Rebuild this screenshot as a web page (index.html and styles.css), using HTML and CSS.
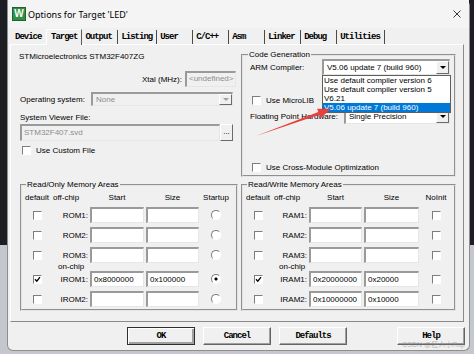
FILE: index.html
```html
<!DOCTYPE html>
<html lang="en">

<head>
    <meta charset="UTF-8">
    <title>Options for Target 'LED'</title>
    <link rel="stylesheet" href="styles.css">
</head>

<body>
    <div class="window">
        <div class="titlebar">
            <span class="app-icon">W</span>
            <span class="title">Options for Target 'LED'</span>
            <svg class="close" viewBox="0 0 8 8"><path d="M0.5 0.5 L7.5 7.5 M7.5 0.5 L0.5 7.5" stroke="#222" stroke-width="0.9" /></svg>
        </div>

        <div class="tabs">
            <span class="tab">Device</span>
            <span class="tab active">Target</span>
            <span class="tab">Output</span>
            <span class="tab">Listing</span>
            <span class="tab">User</span>
            <span class="tab">C/C++</span>
            <span class="tab">Asm</span>
            <span class="tab">Linker</span>
            <span class="tab">Debug</span>
            <span class="tab">Utilities</span>
        </div>

        <div class="panel">
            <!-- device info -->
            <div class="device">
                <div class="chip">STMicroelectronics STM32F407ZG</div>
                <div class="xtal">
                    <span>Xtal (MHz):</span>
                    <span class="field off">&lt;undefined&gt;</span>
                </div>
                <div class="os">
                    <span class="os-label">Operating system:</span>
                    <span class="select off">None<span class="drop"></span></span>
                </div>
                <div class="svf-label">System Viewer File:</div>
                <div class="svf">
                    <span class="field off">STM32F407.svd</span>
                    <span class="dots">...</span>
                </div>
                <div class="opt custom">
                    <span class="check"></span>
                    <span>Use Custom File</span>
                </div>
            </div>

            <fieldset class="group codegen">
                <legend>Code Generation</legend>
                <div class="arm">
                    <span class="arm-label">ARM Compiler:</span>
                    <span class="select">V5.06 update 7 (build 960)<span class="drop"></span>
                        <ul class="droplist">
                            <li>Use default compiler version 6</li>
                            <li>Use default compiler version 5</li>
                            <li>V6.21</li>
                            <li class="hl">V5.06 update 7 (build 960)</li>
                        </ul>
                    </span>
                </div>
                <div class="opt micro">
                    <span class="check"></span>
                    <span>Use MicroLIB</span>
                </div>
                <div class="fp">
                    <span class="fp-label">Floating Point Hardware:</span>
                    <span class="select">Single Precision<span class="drop"></span></span>
                </div>
                <div class="opt cross">
                    <span class="check"></span>
                    <span>Use Cross-Module Optimization</span>
                </div>
            </fieldset>

            <fieldset class="group mem">
                <legend>Read/Only Memory Areas</legend>
                <div class="grid">
                    <span class="hd">default</span>
                    <span class="hd left">off-chip</span>
                    <span class="hd">Start</span>
                    <span class="hd">Size</span>
                    <span class="hd">Startup</span>

                    <span class="check"></span><span class="name">ROM1:</span><span class="field"></span><span class="field"></span><span class="radio"></span>
                    <span class="check"></span><span class="name">ROM2:</span><span class="field"></span><span class="field"></span><span class="radio"></span>
                    <span class="check"></span><span class="name">ROM3:</span><span class="field"></span><span class="field"></span><span class="radio"></span>

                    <span class="onchip">on-chip</span>

                    <span class="check on"><svg viewBox="0 0 7 7"><path d="M1 3.2 L2.8 5.2 L6 1.2" /></svg></span><span class="name">IROM1:</span><span class="field">0x8000000</span><span class="field">0x100000</span><span class="radio on"></span>
                    <span class="check"></span><span class="name">IROM2:</span><span class="field"></span><span class="field"></span><span class="radio"></span>
                </div>
            </fieldset>

            <fieldset class="group mem ram">
                <legend>Read/Write Memory Areas</legend>
                <div class="grid">
                    <span class="hd">default</span>
                    <span class="hd left">off-chip</span>
                    <span class="hd">Start</span>
                    <span class="hd">Size</span>
                    <span class="hd">NoInit</span>

                    <span class="check"></span><span class="name">RAM1:</span><span class="field"></span><span class="field"></span><span class="check"></span>
                    <span class="check"></span><span class="name">RAM2:</span><span class="field"></span><span class="field"></span><span class="check"></span>
                    <span class="check"></span><span class="name">RAM3:</span><span class="field"></span><span class="field"></span><span class="check"></span>

                    <span class="onchip">on-chip</span>

                    <span class="check on"><svg viewBox="0 0 7 7"><path d="M1 3.2 L2.8 5.2 L6 1.2" /></svg></span><span class="name">IRAM1:</span><span class="field">0x20000000</span><span class="field">0x20000</span><span class="check"></span>
                    <span class="check"></span><span class="name">IRAM2:</span><span class="field">0x10000000</span><span class="field">0x10000</span><span class="check"></span>
                </div>
            </fieldset>
        </div>

        <div class="footer">
            <button class="btn default">OK</button>
            <button class="btn">Cancel</button>
            <button class="btn">Defaults</button>
            <button class="btn help">Help</button>
        </div>

        <!-- annotation drawn over the dialog -->
        <svg class="pointer" viewBox="248 100 90 40">
            <polygon points="256,136 318.3,112 317.1,108.7 331,109 320.5,118.1 319.3,114.8" />
        </svg>
        <span class="watermark">CSDN @狂人小Rup</span>
    </div>
</body>

</html>
```

FILE: styles.css
```css
* {
    margin: 0;
    padding: 0;
    box-sizing: border-box;
}

body {
    width: 474px;
    height: 354px;
    overflow: hidden;
    background: linear-gradient(to bottom, #1d1e21 0, #1d1e21 245px, #c4c8ce 245px);
    font-family: "Liberation Sans", Arial, sans-serif;
    font-size: 8px;
    color: #000;
}

div.window {
    position: relative;
    margin-left: 7px;
    width: 463px;
    height: 351px;
    background: #f0f0f0;
    border: 1px solid #8e8e8e;
    border-top: none;
    border-radius: 0 6px 6px 6px;
    display: flex;
    flex-direction: column;
}

/* title bar */
.titlebar {
    height: 28px;
    flex-shrink: 0;
    display: flex;
    align-items: center;
    padding: 0 8px 0 4px;
    background: #f4f4f4;
}

.app-icon {
    width: 14px;
    height: 14px;
    background: #2f8f45;
    border: 1px solid #1d6430;
    color: #fff;
    font: bold 10px/12px "Liberation Sans", sans-serif;
    text-align: center;
}

.title {
    margin-left: 2px;
    font-family: "Noto Sans", "Open Sans", sans-serif;
    font-size: 9px;
}

.close {
    margin-left: auto;
    width: 8px;
    height: 8px;
}

/* tabs */
.tabs {
    height: 16px;
    flex-shrink: 0;
    display: flex;
    align-items: flex-end;
    padding-left: 4px;
    font-family: "Liberation Mono", monospace;
    font-weight: bold;
    font-size: 9px;
    letter-spacing: -1px;
}

.tab {
    height: 14px;
    line-height: 14px;
    min-width: 36px;
    padding: 0 4px 0 3px;
    border-right: 1px solid #4a4a4a;
    white-space: nowrap;
}

.tab.active {
    position: relative;
    z-index: 1;
    height: 16px;
    line-height: 15px;
    min-width: 0;
    margin: 0 0 -1px -2px;
    padding: 0 4px;
    background: #f0f0f0;
    border-top: 1px solid #fff;
    border-left: 1px solid #fff;
    border-right-color: #5a5a5a;
}

/* tab page */
.panel {
    margin-left: 2px;
    width: 454px;
    height: 278px;
    flex-shrink: 0;
    border: 1px solid;
    border-color: #fff #8a8a8a #8a8a8a #fff;
    padding: 5px 7px 10px 9px;
    display: grid;
    grid-template-columns: 218px 215px;
    grid-template-rows: 127px 131px;
    column-gap: 3px;
    row-gap: 3px;
}

.off {
    color: #8d8d8d;
}

.field {
    display: block;
    height: 16px;
    line-height: 13px;
    padding-left: 2px;
    background: #fff;
    border-style: solid;
    border-width: 2px 1px 1px 2px;
    border-color: #9a9a9a #e6e6e6 #e6e6e6 #9a9a9a;
    white-space: nowrap;
    overflow: hidden;
}

.field.off {
    background: #f0f0f0;
}

.select {
    position: relative;
    display: flex;
    align-items: center;
    height: 16px;
    padding-left: 3px;
    background: #fff;
    border-style: solid;
    border-width: 2px 1px 1px 2px;
    border-color: #9a9a9a #e6e6e6 #e6e6e6 #9a9a9a;
    white-space: nowrap;
}

.select.off {
    background: #f0f0f0;
}

.drop {
    margin-left: auto;
    width: 13px;
    height: 100%;
    display: flex;
    align-items: center;
    justify-content: center;
    background: #f0f0f0;
    border: 1px solid;
    border-color: #fff #6a6a6a #6a6a6a #fff;
}

.drop::before {
    content: "";
    border-left: 3px solid transparent;
    border-right: 3px solid transparent;
    border-top: 3px solid #000;
}

.select.off .drop::before {
    border-top-color: #a0a0a0;
}

.droplist {
    position: absolute;
    z-index: 3;
    top: calc(100% + 1px);
    left: -2px;
    width: 129px;
    list-style: none;
    background: #fff;
    border: 1px solid #5e5e5e;
}

.droplist li {
    line-height: 9px;
    padding-left: 1px;
    white-space: nowrap;
}

.droplist li.hl {
    background: #0078d7;
    color: #fff;
}

.check {
    position: relative;
    display: block;
    width: 9px;
    height: 9px;
    flex-shrink: 0;
    background: #fff;
    border: 1px solid;
    border-color: #7d7d7d #fff #fff #7d7d7d;
}

.check svg {
    position: absolute;
    left: 0;
    top: 0;
    width: 7px;
    height: 7px;
}

.check path {
    fill: none;
    stroke: #000;
    stroke-width: 1.3;
}

.radio {
    display: block;
    width: 10px;
    height: 10px;
    border-radius: 50%;
    background: #fff;
    border: 1px solid;
    border-color: #7d7d7d #fff #fff #7d7d7d;
}

.radio.on {
    background: radial-gradient(circle, #000 0, #000 1.3px, #fff 1.8px);
}

.opt {
    display: flex;
    align-items: center;
    height: 10px;
}

.opt .check {
    margin: 0 5px 0 2px;
}

/* left column */
.chip {
    line-height: 10px;
    margin: 2px 0 0 -1px;
}

.xtal {
    display: flex;
    align-items: center;
    justify-content: flex-end;
    height: 16px;
    margin-top: 9px;
    padding-right: 2px;
}

.xtal .field {
    width: 51px;
    margin-left: 3px;
    line-height: 12px;
}

.os {
    display: flex;
    align-items: center;
    height: 14px;
    margin-top: 5px;
}

.os-label {
    width: 71px;
}

.os .select {
    width: 142px;
    height: 14px;
}

.svf-label {
    line-height: 10px;
    margin-top: 7px;
}

.svf {
    display: flex;
    height: 17px;
    margin-top: 1px;
}

.svf .field {
    width: 200px;
    height: 17px;
    line-height: 14px;
}

.dots {
    width: 13px;
    text-align: center;
    line-height: 13px;
    background: #f0f0f0;
    border: 1px solid;
    border-color: #fff #6a6a6a #6a6a6a #fff;
}

.custom {
    margin-top: 4px;
}

/* group boxes */
.group {
    min-width: 0;
    border: 2px groove #e4e4e4;
}

.group legend {
    padding: 0 1px;
    line-height: 10px;
}

.codegen {
    padding: 0 4px 0 7px;
}

.codegen legend {
    margin-left: -2px;
}

.arm,
.fp {
    display: flex;
    align-items: center;
    height: 16px;
}

.arm {
    margin-top: -1px;
}

.arm-label {
    width: 72px;
}

.arm .select {
    width: 128px;
    padding-left: 3px;
}

.micro {
    margin-top: 20px;
}

.fp {
    margin-top: 3px;
}

.fp-label {
    width: 94px;
}

.fp .select {
    width: 106px;
}

.cross {
    margin-top: 38px;
}

/* memory areas */
.mem {
    padding: 3px 2px 2px 2px;
}

.mem legend {
    margin-left: 2px;
}

.grid {
    display: grid;
    grid-template-columns: 26px 36px 54px 53px 30px;
    grid-template-rows: 10px 16px 16px 16px 0 16px 16px;
    column-gap: 2px;
    row-gap: 4px;
    align-items: center;
}

.ram .grid {
    grid-template-columns: 26px 34px 53px 55px 30px;
}

.hd {
    line-height: 10px;
    text-align: center;
    white-space: nowrap;
}

.hd.left {
    text-align: left;
    padding-left: 1px;
}

.grid .check,
.grid .radio {
    justify-self: center;
}

.name {
    justify-self: end;
    white-space: nowrap;
}

.onchip {
    grid-column: 2 / -1;
    line-height: 10px;
    margin: -5px 0;
    white-space: nowrap;
    padding-left: 6px;
}

/* buttons */
.footer {
    flex: 1;
    display: flex;
    align-items: flex-start;
    gap: 8px;
    padding: 5px 4px 0 119px;
}

.btn {
    width: 68px;
    height: 18px;
    background: #f0f0f0;
    border: 1px solid;
    border-color: #fff #646464 #646464 #fff;
    box-shadow: inset -1px -1px #a0a0a0;
    font-family: "Liberation Mono", monospace;
    font-weight: bold;
    font-size: 9px;
    letter-spacing: -1px;
    color: #000;
}

.btn.default {
    border-color: #2e2e2e;
    box-shadow: inset 1px 1px #fff, inset -2px -2px #a0a0a0;
}

.btn.help {
    margin-left: auto;
}

/* overlays */
.pointer {
    position: absolute;
    left: 240px;
    top: 100px;
    width: 90px;
    height: 40px;
    z-index: 4;
}

.pointer polygon {
    fill: #e8403a;
}

.watermark {
    position: absolute;
    right: 4px;
    bottom: 1px;
    font-family: "Liberation Sans", "Noto Sans CJK SC", sans-serif;
    font-size: 7px;
    color: rgba(130, 130, 130, 0.55);
}
```
